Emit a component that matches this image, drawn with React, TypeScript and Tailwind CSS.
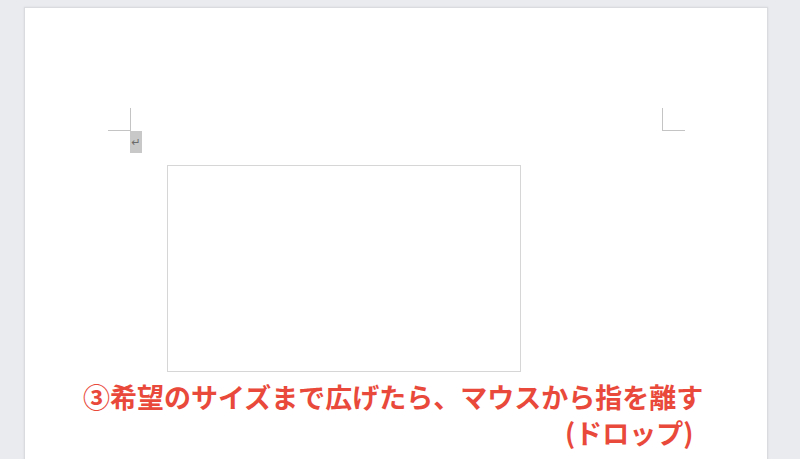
import React from "react";

export default function App() {
  return (
    <div className="w-[800px] h-[459px] overflow-hidden bg-[#e9ebee]">
      <div className="ml-[24px] mt-[7px] w-[744px] h-[460px] bg-white border-l border-t border-r border-[#d9dbde] shadow-[0_0_2px_rgba(0,0,0,0.08)] pt-[100px] flex flex-col">
        <div className="flex h-[23px]">
          <div className="ml-[83px] w-[23px] h-[23px] border-r border-b border-[#c4c4c4]" />
          <div className="ml-[531px] w-[23px] h-[23px] border-l border-b border-[#c4c4c4]" />
        </div>
        <div className="ml-[105px] w-[12px] h-[22px] bg-[#c8c8c8] flex items-center justify-center text-[11px] leading-none text-[#6b6b6b] font-['DejaVu_Sans',sans-serif]">
          ↵
        </div>
        <div className="mt-[12px] ml-[142px] w-[354px] h-[207px] border border-[#d6d6d6]" />
        <div className="mt-[7px] font-['Noto_Sans_CJK_JP',sans-serif] font-bold text-[27px] leading-[36px] text-[#e9493a] whitespace-nowrap">
          <div className="pl-[58px]">③希望のサイズまで広げたら、マウスから指を離す</div>
          <div className="pl-[540px]">(ドロップ)</div>
        </div>
      </div>
    </div>
  );
}
